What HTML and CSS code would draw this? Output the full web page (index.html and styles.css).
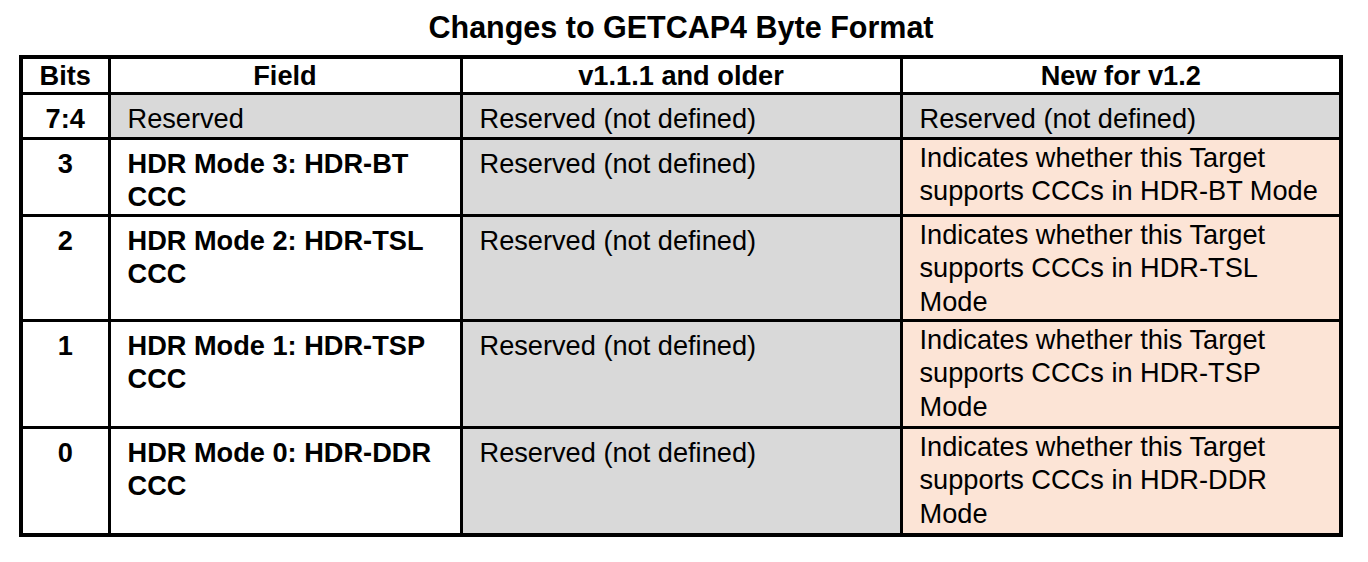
FILE: index.html
```html
<!DOCTYPE html>
<html>
<head>
<meta charset="utf-8">
<link rel="stylesheet" href="styles.css">
</head>
<body>
<div class="page">
  <h1 class="title">Changes to GETCAP4 Byte Format</h1>
  <table class="fmt">
    <colgroup>
      <col class="c-bits">
      <col class="c-field">
      <col class="c-old">
      <col class="c-new">
    </colgroup>
    <thead>
      <tr class="head">
        <th>Bits</th>
        <th>Field</th>
        <th>v1.1.1 and older</th>
        <th>New for v1.2</th>
      </tr>
    </thead>
    <tbody>
      <tr>
        <td class="bits">7:4</td>
        <td class="gray">Reserved</td>
        <td class="gray">Reserved (not defined)</td>
        <td class="gray">Reserved (not defined)</td>
      </tr>
      <tr>
        <td class="bits">3</td>
        <td class="field">HDR Mode 3: HDR-BT CCC</td>
        <td class="gray">Reserved (not defined)</td>
        <td class="peach">Indicates whether this Target supports CCCs in HDR-BT Mode</td>
      </tr>
      <tr>
        <td class="bits">2</td>
        <td class="field">HDR Mode 2: HDR-TSL CCC</td>
        <td class="gray">Reserved (not defined)</td>
        <td class="peach">Indicates whether this Target supports CCCs in HDR-TSL Mode</td>
      </tr>
      <tr class="tall">
        <td class="bits">1</td>
        <td class="field">HDR Mode 1: HDR-TSP CCC</td>
        <td class="gray">Reserved (not defined)</td>
        <td class="peach">Indicates whether this Target supports CCCs in HDR-TSP Mode</td>
      </tr>
      <tr class="tall">
        <td class="bits">0</td>
        <td class="field">HDR Mode 0: HDR-DDR CCC</td>
        <td class="gray">Reserved (not defined)</td>
        <td class="peach">Indicates whether this Target supports CCCs in HDR-DDR Mode</td>
      </tr>
    </tbody>
  </table>
</div>
</body>
</html>
```

FILE: styles.css
```css
html, body {
  margin: 0;
  padding: 0;
  background: #ffffff;
}

body {
  font-family: "Liberation Sans", Arial, sans-serif;
  color: #000000;
}

.page {
  padding: 0 0 0 19px;
  width: 1324px;
}

.title {
  margin: 0;
  height: 55px;
  padding-top: 9px;
  box-sizing: border-box;
  font-size: 30.5px;
  line-height: 36px;
  font-weight: bold;
  text-align: center;
}

.fmt {
  width: 1320px;
  table-layout: fixed;
  border-collapse: collapse;
  border: 4px solid #000;
  font-size: 27.2px;
  line-height: 33.3px;
}

.c-bits { width: 88px; }
.c-field { width: 352px; }
.c-old { width: 440px; }
.c-new { width: 440px; }

.fmt th,
.fmt td {
  border: 3px solid #000;
  vertical-align: top;
  text-align: left;
  padding: 7px 17px 1px 17px;
}

.fmt th {
  text-align: center;
  font-weight: bold;
  padding: 0 4px;
  background: #ffffff;
}

.fmt td.bits {
  text-align: center;
  font-weight: bold;
  padding-left: 4px;
  padding-right: 4px;
}

.fmt td.field {
  font-weight: bold;
}

.fmt td.gray {
  background: #d9d9d9;
}

.fmt td.peach {
  background: #fce4d6;
  padding-top: 1px;
}

.fmt tr.tall td.peach {
  padding-bottom: 3px;
}
```
